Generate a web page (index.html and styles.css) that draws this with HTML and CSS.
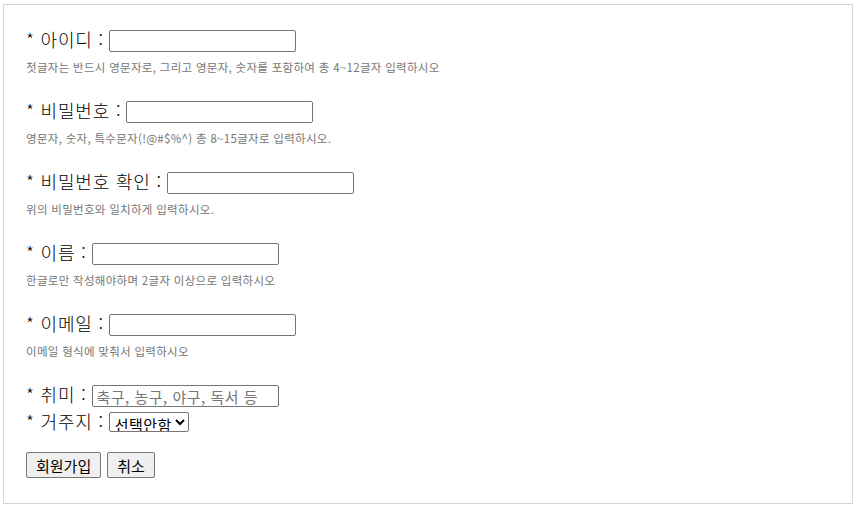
FILE: index.html
```html
<!DOCTYPE html>
<html lang="ko">
<head>
<meta charset="utf-8">
<link rel="stylesheet" href="styles.css">
</head>
<body>
<form class="join">
  <div class="field">
    <div class="row"><span class="label">* 아이디 :</span><input class="text" type="text"></div>
    <p class="hint">첫글자는 반드시 영문자로, 그리고 영문자, 숫자를 포함하여 총 4~12글자 입력하시오</p>
  </div>
  <div class="field">
    <div class="row"><span class="label">* 비밀번호 :</span><input class="text" type="password"></div>
    <p class="hint">영문자, 숫자, 특수문자(!@#$%^) 총 8~15글자로 입력하시오.</p>
  </div>
  <div class="field">
    <div class="row"><span class="label">* 비밀번호 확인 :</span><input class="text" type="password"></div>
    <p class="hint">위의 비밀번호와 일치하게 입력하시오.</p>
  </div>
  <div class="field">
    <div class="row"><span class="label">* 이름 :</span><input class="text" type="text"></div>
    <p class="hint">한글로만 작성해야하며 2글자 이상으로 입력하시오</p>
  </div>
  <div class="field">
    <div class="row"><span class="label">* 이메일 :</span><input class="text" type="text"></div>
    <p class="hint">이메일 형식에 맞춰서 입력하시오</p>
  </div>
  <div class="extra">
    <div class="row"><span class="label">* 취미 :</span><input class="text" type="text" placeholder="축구, 농구, 야구, 독서 등"></div>
    <div class="row row-small"><span class="label">* 거주지 :</span><select class="select"><option>선택안함</option><option>서울</option><option>경기</option></select></div>
  </div>
  <div class="buttons">
    <button type="button" class="btn">회원가입</button>
    <button type="button" class="btn">취소</button>
  </div>
</form>
</body>
</html>
```
FILE: styles.css
```css
html, body {
  margin: 0;
  padding: 0;
  background: #fff;
}
body {
  padding: 4px 0 0 3px;
  font-family: "Noto Sans CJK KR", "Noto Sans", sans-serif;
  color: #000;
}
.join {
  box-sizing: border-box;
  width: 850px;
  height: 500px;
  border: 1px solid #d3d3d3;
  padding: 25px 22px 0 22px;
  display: flex;
  flex-direction: column;
}
.field {
  display: flex;
  flex-direction: column;
  margin-bottom: 26px;
}
.row {
  display: flex;
  align-items: center;
  height: 22px;
}
.row-small {
  height: 20px;
}
.label {
  align-self: flex-start;
  font-size: 18px;
  font-weight: 300;
  line-height: 18px;
  letter-spacing: 0.8px;
  white-space: pre;
  margin-right: 5px;
}
.text {
  box-sizing: border-box;
  width: 187px;
  height: 22px;
  border: 1px solid #767676;
  border-radius: 2px;
  padding: 1px 4px;
  font-family: "Noto Sans CJK KR", sans-serif;
  font-size: 15px;
  letter-spacing: 0.5px;
  outline: none;
  background: #fff;
}
.text::placeholder {
  color: #757575;
}
.hint {
  margin: 7px 0 0 0;
  font-size: 11.5px;
  line-height: 16px;
  letter-spacing: 0.3px;
  color: #767676;
}
.extra {
  display: flex;
  flex-direction: column;
  gap: 5px;
}
.select {
  box-sizing: border-box;
  height: 20px;
  border: 1px solid #767676;
  border-radius: 2px;
  font-family: "Noto Sans CJK KR", sans-serif;
  font-size: 15px;
  letter-spacing: 0.4px;
  padding: 0 0 0 1px;
  background: #fff;
  color: #000;
}
.buttons {
  display: flex;
  gap: 6px;
  margin-top: 20px;
}
.btn {
  box-sizing: border-box;
  height: 26px;
  padding: 0 9px;
  border: 1px solid #767676;
  border-radius: 2px;
  background: #efefef;
  font-family: "Noto Sans CJK KR", sans-serif;
  font-size: 15px;
  color: #000;
}
```
